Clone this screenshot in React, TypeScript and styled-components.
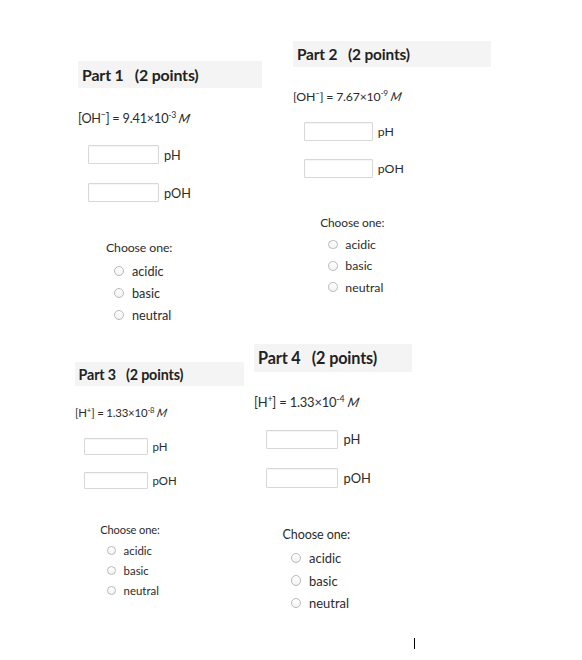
import React from "react";
import styled, { createGlobalStyle } from "styled-components";

const GlobalStyle = createGlobalStyle`
  html, body {
    margin: 0;
    padding: 0;
    background: #ffffff;
  }
  body {
    font-family: Lato, "Open Sans", "Liberation Sans", sans-serif;
    color: #2b2b2b;
  }
`;

type Scale = { $s: number };

const Page = styled.div`
  width: 582px;
  height: 660px;
  padding-top: 41px;
  box-sizing: border-box;
  overflow: hidden;
`;

const Row = styled.div<{ $height: number }>`
  display: flex;
  align-items: flex-start;
  height: ${(p) => p.$height}px;
`;

const Panel = styled.section<Scale & { $left: number; $top: number }>`
  display: flex;
  flex-direction: column;
  margin-left: ${(p) => p.$left}px;
  margin-top: ${(p) => p.$top}px;
`;

const Header = styled.h3<Scale & { $width: number }>`
  margin: 0;
  width: ${(p) => p.$width}px;
  height: ${(p) => 27 * p.$s}px;
  box-sizing: border-box;
  padding-left: ${(p) => 4 * p.$s}px;
  display: flex;
  align-items: center;
  background: #f4f4f4;
  color: #222222;
  font-size: ${(p) => 15.9 * p.$s}px;
  font-weight: 700;
  letter-spacing: -0.15px;
`;

const Points = styled.span<Scale>`
  margin-left: ${(p) => 11 * p.$s}px;
`;

const Formula = styled.div<Scale>`
  margin-top: ${(p) => 22 * p.$s}px;
  height: ${(p) => 16 * p.$s}px;
  line-height: ${(p) => 16 * p.$s}px;
  font-size: ${(p) => 12.7 * p.$s}px;
  letter-spacing: -0.2px;
  white-space: nowrap;

  sup {
    font-size: 0.68em;
    line-height: 0;
    vertical-align: 0.55em;
  }
`;

const Unit = styled.span`
  display: inline-block;
  margin-left: 0.25em;
  font-style: italic;
  transform: skewX(-12deg);
`;

const Field = styled.label<Scale & { $inset: number }>`
  display: flex;
  align-items: center;
  margin-left: ${(p) => p.$inset}px;
  margin-top: ${(p) => 19 * p.$s}px;
  gap: ${(p) => 5 * p.$s}px;
  font-size: ${(p) => 12.7 * p.$s}px;
`;

const TextBox = styled.input<Scale>`
  width: ${(p) => 71 * p.$s}px;
  height: ${(p) => 19 * p.$s}px;
  box-sizing: border-box;
  margin: 0;
  padding: 0;
  border: 1px solid #d8d8d8;
  border-radius: 1px;
  background: #ffffff;
  box-shadow: inset 0 1px 1px rgba(0, 0, 0, 0.04);
`;

const Choose = styled.fieldset<Scale>`
  border: 0;
  margin: ${(p) => 38 * p.$s}px 0 0 ${(p) => 28 * p.$s}px;
  padding: 0;
  display: flex;
  flex-direction: column;
`;

const Legend = styled.div<Scale>`
  height: ${(p) => 16 * p.$s}px;
  line-height: ${(p) => 16 * p.$s}px;
  font-size: ${(p) => 12.3 * p.$s}px;
  letter-spacing: -0.1px;
  margin-bottom: ${(p) => 4 * p.$s}px;
`;

const Option = styled.label<Scale>`
  display: flex;
  align-items: center;
  height: ${(p) => 22 * p.$s}px;
  padding-left: ${(p) => 8 * p.$s}px;
  gap: ${(p) => 8 * p.$s}px;
  font-size: ${(p) => 12.7 * p.$s}px;
`;

const Radio = styled.input<Scale>`
  appearance: none;
  margin: 0;
  width: ${(p) => 10 * p.$s}px;
  height: ${(p) => 10 * p.$s}px;
  border: 1px solid #b9b9b9;
  border-radius: 50%;
  background: linear-gradient(#ffffff, #f3f3f3);
  box-sizing: border-box;
`;

const Caret = styled.span`
  display: block;
  width: 1px;
  height: 11px;
  margin: 24px 0 0 160px;
  background: #000000;
`;

type PartSpec = {
  n: number;
  s: number;
  left: number;
  top: number;
  width: number;
  inset: number;
  ion: "OH" | "H";
  value: string;
  exp: string;
  caret?: boolean;
};

const parts: PartSpec[][] = [
  [
    { n: 1, s: 1, left: 78, top: 20, width: 184, inset: 10, ion: "OH", value: "9.41", exp: "-3" },
    { n: 2, s: 0.97, left: 31, top: 0, width: 198, inset: 11, ion: "OH", value: "7.67", exp: "-9" },
  ],
  [
    { n: 3, s: 0.9, left: 75, top: 18, width: 169, inset: 9, ion: "H", value: "1.33", exp: "-8" },
    { n: 4, s: 1.02, left: 10, top: 0, width: 158, inset: 12, ion: "H", value: "1.33", exp: "-4", caret: true },
  ],
];

const Part: React.FC<{ part: PartSpec }> = ({ part }) => {
  const { s } = part;
  const name = `part${part.n}`;
  return (
    <Panel $s={s} $left={part.left} $top={part.top}>
      <Header $s={s} $width={part.width}>
        Part {part.n}
        <Points $s={s}>(2 points)</Points>
      </Header>
      <Formula $s={s}>
        [{part.ion}
        <sup>{part.ion === "OH" ? "−" : "+"}</sup>] = {part.value}×10<sup>{part.exp}</sup>
        <Unit>M</Unit>
      </Formula>
      <Field $s={s} $inset={part.inset}>
        <TextBox $s={s} type="text" />
        pH
      </Field>
      <Field $s={s} $inset={part.inset}>
        <TextBox $s={s} type="text" />
        pOH
      </Field>
      <Choose $s={s}>
        <Legend $s={s}>Choose one:</Legend>
        {["acidic", "basic", "neutral"].map((label) => (
          <Option $s={s} key={label}>
            <Radio $s={s} type="radio" name={name} />
            {label}
          </Option>
        ))}
      </Choose>
      {part.caret && <Caret />}
    </Panel>
  );
};

const App: React.FC = () => {
  return (
    <>
      <GlobalStyle />
      <Page>
        {parts.map((row, i) => (
          <Row key={i} $height={i === 0 ? 303 : 316}>
            {row.map((part) => (
              <Part key={part.n} part={part} />
            ))}
          </Row>
        ))}
      </Page>
    </>
  );
};

export default App;
